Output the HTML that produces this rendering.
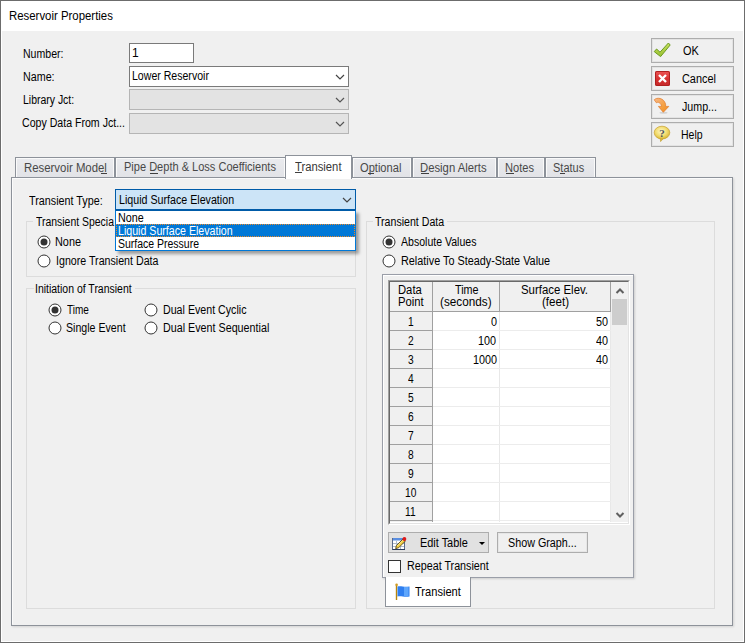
<!DOCTYPE html>
<html><head><meta charset="utf-8"><style>
html,body{margin:0;padding:0;width:745px;height:643px;overflow:hidden;background:#f0f0f0}
body>div,body>svg{position:absolute}
div{position:absolute;white-space:pre;font-family:"Liberation Sans",sans-serif}
</style></head><body>
<div style="left:0px;top:0px;width:745px;height:643px;background:#f0f0f0;border:1px solid #6c6c6c;box-sizing:border-box"></div>
<div style="left:1px;top:1px;width:743px;height:30px;background:#fff"></div>
<div style="left:1px;top:31px;width:1px;height:611px;background:#fff"></div>
<div style="left:743px;top:31px;width:1px;height:611px;background:#fff"></div>
<div style="left:1px;top:641px;width:743px;height:1px;background:#fff"></div>
<div style="left:9.25px;top:10px;font-size:12px;line-height:12px;color:#000;transform:scaleX(0.9500);transform-origin:0 0;">Reservoir Properties</div>
<div style="left:22.72px;top:48px;font-size:12px;line-height:12px;color:#000;transform:scaleX(0.8795);transform-origin:0 0;">Number:</div>
<div style="left:22.71px;top:71px;font-size:12px;line-height:12px;color:#000;transform:scaleX(0.8939);transform-origin:0 0;">Name:</div>
<div style="left:22.73px;top:94px;font-size:12px;line-height:12px;color:#000;transform:scaleX(0.8719);transform-origin:0 0;">Library Jct:</div>
<div style="left:21.92px;top:117px;font-size:12px;line-height:12px;color:#000;transform:scaleX(0.8826);transform-origin:0 0;">Copy Data From Jct...</div>
<div style="left:129px;top:43px;width:65px;height:20px;background:#fff;border:1px solid #7a7a7a;box-sizing:border-box"></div>
<div style="left:132.00px;top:47px;font-size:12px;line-height:12px;color:#000;">1</div>
<div style="left:129px;top:66px;width:220px;height:21px;background:#fff;border:1px solid #7a7a7a;box-sizing:border-box"></div>
<svg width="10" height="6" viewBox="0 0 10 6" style="position:absolute;left:335px;top:74px"><path d="M1 1 L5 5 L9 1" fill="none" stroke="#444" stroke-width="1.2"/></svg>
<div style="left:131.52px;top:70px;font-size:12px;line-height:12px;color:#000;transform:scaleX(0.8802);transform-origin:0 0;">Lower Reservoir</div>
<div style="left:129px;top:89px;width:220px;height:21px;background:#e3e3e3;border:1px solid #b5b5b5;box-sizing:border-box"></div>
<svg width="10" height="6" viewBox="0 0 10 6" style="position:absolute;left:335px;top:97px"><path d="M1 1 L5 5 L9 1" fill="none" stroke="#555" stroke-width="1.2"/></svg>
<div style="left:129px;top:113px;width:220px;height:21px;background:#e3e3e3;border:1px solid #b5b5b5;box-sizing:border-box"></div>
<svg width="10" height="6" viewBox="0 0 10 6" style="position:absolute;left:335px;top:121px"><path d="M1 1 L5 5 L9 1" fill="none" stroke="#555" stroke-width="1.2"/></svg>
<div style="left:651px;top:38px;width:83px;height:25px;background:#f0f0f0;border:1px solid #adadad;box-sizing:border-box"></div>
<div style="left:652px;top:39px;width:81px;height:23px;border:1px solid #e3e3e3;box-sizing:border-box"></div>
<div style="left:683.40px;top:45px;font-size:12px;line-height:12px;color:#000;transform:scaleX(0.9118);transform-origin:0 0;">OK</div>
<div style="left:651px;top:66px;width:83px;height:25px;background:#f0f0f0;border:1px solid #adadad;box-sizing:border-box"></div>
<div style="left:652px;top:67px;width:81px;height:23px;border:1px solid #e3e3e3;box-sizing:border-box"></div>
<div style="left:681.59px;top:73px;font-size:12px;line-height:12px;color:#000;transform:scaleX(0.9083);transform-origin:0 0;">Cancel</div>
<div style="left:651px;top:94px;width:83px;height:25px;background:#f0f0f0;border:1px solid #adadad;box-sizing:border-box"></div>
<div style="left:652px;top:95px;width:81px;height:23px;border:1px solid #e3e3e3;box-sizing:border-box"></div>
<div style="left:681.70px;top:101px;font-size:12px;line-height:12px;color:#000;transform:scaleX(0.8895);transform-origin:0 0;">Jump...</div>
<div style="left:651px;top:122px;width:83px;height:25px;background:#f0f0f0;border:1px solid #adadad;box-sizing:border-box"></div>
<div style="left:652px;top:123px;width:81px;height:23px;border:1px solid #e3e3e3;box-sizing:border-box"></div>
<div style="left:680.83px;top:129px;font-size:12px;line-height:12px;color:#000;transform:scaleX(0.8739);transform-origin:0 0;">Help</div>
<svg width="20" height="20" viewBox="0 0 20 20" style="position:absolute;left:652px;top:40px"><defs><linearGradient id="gck" x1="0" y1="0" x2="0" y2="1"><stop offset="0" stop-color="#c8e060"/><stop offset="1" stop-color="#98c030"/></linearGradient></defs><path d="M2.2 11.6 L4.6 9 L8 12.2 L16.4 3 L18.2 5 L8.6 16.6 Z" fill="url(#gck)" stroke="#6a9a20" stroke-width="1" stroke-linejoin="round"/></svg>
<div style="left:655px;top:71px;width:15px;height:15px;background:linear-gradient(#ee5555,#d63030 55%,#c42a2a);border-radius:2px;box-shadow:inset 0 0 0 1px #b02020"></div>
<svg width="15" height="15" viewBox="0 0 15 15" style="position:absolute;left:655px;top:71px"><path d="M4 4 L11 11 M11 4 L4 11" stroke="#fff" stroke-width="2.4"/></svg>
<svg width="18" height="18" viewBox="0 0 18 18" style="position:absolute;left:653px;top:97px"><defs><linearGradient id="gjp" x1="0" y1="0" x2="1" y2="1"><stop offset="0" stop-color="#f8b888"/><stop offset="0.6" stop-color="#f5a040"/><stop offset="1" stop-color="#f08a20"/></linearGradient></defs><ellipse cx="10.5" cy="15.8" rx="4" ry="1" fill="rgba(0,0,0,0.12)"/><path d="M1.2 2.8 C3.5 0.2 10.8 0.4 12.6 7.2 L12.6 9.4 L15.8 9.4 L10.3 15.3 L5.4 9.4 L8.6 9.4 C8 5.8 4.8 4.4 3.4 5.8 Z" fill="url(#gjp)" stroke="#e07828" stroke-width="0.7" stroke-linejoin="round"/></svg>
<svg width="18" height="18" viewBox="0 0 18 18" style="position:absolute;left:653px;top:125px"><defs><radialGradient id="ghp" cx="0.45" cy="0.4" r="0.6"><stop offset="0" stop-color="#fdf8c8"/><stop offset="0.6" stop-color="#f2dc70"/><stop offset="1" stop-color="#d8b838"/></radialGradient></defs><path d="M7.2 12.8 L7.6 16.6 L11 12.8 Z" fill="#e0c040" stroke="#c09a28" stroke-width="0.6"/><ellipse cx="9" cy="7.6" rx="7.8" ry="6.4" fill="url(#ghp)" stroke="#c8a030" stroke-width="0.7"/><text x="9" y="11.8" font-family="Liberation Serif" font-weight="bold" font-size="11" text-anchor="middle" fill="#4a5060">?</text></svg>
<div style="left:11px;top:177px;width:722px;height:449px;background:#f0f0f0;border:1px solid #8d929a;box-sizing:border-box;box-shadow:1px 1px 2px rgba(0,0,0,0.12)"></div>
<div style="left:12px;top:178px;width:720px;height:1px;background:#fbfbfb"></div>
<div style="left:12px;top:178px;width:1px;height:446px;background:#fbfbfb"></div>
<div style="left:15px;top:157px;width:100px;height:21px;background:linear-gradient(#eaebee,#e2e3e7);border:1px solid #8d929a;box-sizing:border-box;box-shadow:inset 1px 1px 0 #fafafa, inset -1px 0 0 #fafafa"></div>
<div style="left:23.65px;top:162px;font-size:12px;line-height:12px;color:#484848;transform:scaleX(0.9488);transform-origin:0 0;">Reservoir Model</div>
<div style="left:115px;top:157px;width:171px;height:21px;background:linear-gradient(#eaebee,#e2e3e7);border:1px solid #8d929a;box-sizing:border-box;box-shadow:inset 1px 1px 0 #fafafa, inset -1px 0 0 #fafafa"></div>
<div style="left:123.58px;top:161px;font-size:12px;line-height:12px;color:#484848;transform:scaleX(0.9195);transform-origin:0 0;">Pipe Depth &amp; Loss Coefficients</div>
<div style="left:352px;top:157px;width:60px;height:21px;background:linear-gradient(#eaebee,#e2e3e7);border:1px solid #8d929a;box-sizing:border-box;box-shadow:inset 1px 1px 0 #fafafa, inset -1px 0 0 #fafafa"></div>
<div style="left:360.30px;top:162px;font-size:12px;line-height:12px;color:#484848;transform:scaleX(0.9250);transform-origin:0 0;">Optional</div>
<div style="left:412px;top:157px;width:85px;height:21px;background:linear-gradient(#eaebee,#e2e3e7);border:1px solid #8d929a;box-sizing:border-box;box-shadow:inset 1px 1px 0 #fafafa, inset -1px 0 0 #fafafa"></div>
<div style="left:420.26px;top:162px;font-size:12px;line-height:12px;color:#484848;transform:scaleX(0.9420);transform-origin:0 0;">Design Alerts</div>
<div style="left:497px;top:157px;width:48px;height:21px;background:linear-gradient(#eaebee,#e2e3e7);border:1px solid #8d929a;box-sizing:border-box;box-shadow:inset 1px 1px 0 #fafafa, inset -1px 0 0 #fafafa"></div>
<div style="left:505.27px;top:162px;font-size:12px;line-height:12px;color:#484848;transform:scaleX(0.9267);transform-origin:0 0;">Notes</div>
<div style="left:545px;top:157px;width:51px;height:21px;background:linear-gradient(#eaebee,#e2e3e7);border:1px solid #8d929a;box-sizing:border-box;box-shadow:inset 1px 1px 0 #fafafa, inset -1px 0 0 #fafafa"></div>
<div style="left:553.28px;top:162px;font-size:12px;line-height:12px;color:#484848;transform:scaleX(0.9152);transform-origin:0 0;">Status</div>
<div style="left:285px;top:155px;width:67px;height:24px;background:#fff;border:1px solid #8d929a;border-bottom:none;box-sizing:border-box"></div>
<div style="left:295.00px;top:161px;font-size:12px;line-height:12px;color:#383838;transform:scaleX(0.9380);transform-origin:0 0;">Transient</div>
<div style="left:101px;top:173px;width:6px;height:1px;background:#404040"></div>
<div style="left:150px;top:173px;width:8px;height:1px;background:#404040"></div>
<div style="left:295px;top:172px;width:7px;height:1px;background:#404040"></div>
<div style="left:368px;top:173px;width:6px;height:1px;background:#404040"></div>
<div style="left:421px;top:173px;width:8px;height:1px;background:#404040"></div>
<div style="left:506px;top:173px;width:8px;height:1px;background:#404040"></div>
<div style="left:560px;top:173px;width:5px;height:1px;background:#404040"></div>
<div style="left:29.40px;top:195px;font-size:12px;line-height:12px;color:#000;transform:scaleX(0.8975);transform-origin:0 0;">Transient Type:</div>
<div style="left:26px;top:221px;width:330px;height:56px;border:1px solid #dcdcdc;box-sizing:border-box"></div>
<div style="left:33px;top:220px;width:95px;height:3px;background:#f0f0f0"></div>
<div style="left:35.60px;top:216px;font-size:12px;line-height:12px;color:#000;transform:scaleX(0.8700);transform-origin:0 0;">Transient Specia</div>
<div style="left:26px;top:288px;width:330px;height:321px;border:1px solid #dcdcdc;box-sizing:border-box"></div>
<div style="left:33.5px;top:287px;width:101px;height:3px;background:#f0f0f0"></div>
<div style="left:34.73px;top:283px;font-size:12px;line-height:12px;color:#000;transform:scaleX(0.8727);transform-origin:0 0;">Initiation of Transient</div>
<div style="left:366px;top:221px;width:349px;height:388px;border:1px solid #dcdcdc;box-sizing:border-box"></div>
<div style="left:373.2px;top:220px;width:74px;height:3px;background:#f0f0f0"></div>
<div style="left:375.20px;top:216px;font-size:12px;line-height:12px;color:#000;transform:scaleX(0.8833);transform-origin:0 0;">Transient Data</div>
<svg width="14" height="14" viewBox="0 0 14 14" style="position:absolute;left:36.5px;top:234.5px"><circle cx="7" cy="7" r="6" fill="#fff" stroke="#333" stroke-width="1"/><circle cx="7" cy="7" r="3.5" fill="#333"/></svg>
<div style="left:55.49px;top:236px;font-size:12px;line-height:12px;color:#000;transform:scaleX(0.9074);transform-origin:0 0;">None</div>
<svg width="14" height="14" viewBox="0 0 14 14" style="position:absolute;left:36.5px;top:253.5px"><circle cx="7" cy="7" r="6" fill="#fff" stroke="#333" stroke-width="1"/></svg>
<div style="left:55.51px;top:255px;font-size:12px;line-height:12px;color:#000;transform:scaleX(0.8877);transform-origin:0 0;">Ignore Transient Data</div>
<svg width="14" height="14" viewBox="0 0 14 14" style="position:absolute;left:47.5px;top:302.5px"><circle cx="7" cy="7" r="6" fill="#fff" stroke="#333" stroke-width="1"/><circle cx="7" cy="7" r="3.5" fill="#333"/></svg>
<div style="left:67.30px;top:304px;font-size:12px;line-height:12px;color:#000;transform:scaleX(0.8346);transform-origin:0 0;">Time</div>
<svg width="14" height="14" viewBox="0 0 14 14" style="position:absolute;left:47.5px;top:320.5px"><circle cx="7" cy="7" r="6" fill="#fff" stroke="#333" stroke-width="1"/></svg>
<div style="left:66.42px;top:322px;font-size:12px;line-height:12px;color:#000;transform:scaleX(0.8848);transform-origin:0 0;">Single Event</div>
<svg width="14" height="14" viewBox="0 0 14 14" style="position:absolute;left:143.5px;top:302.5px"><circle cx="7" cy="7" r="6" fill="#fff" stroke="#333" stroke-width="1"/></svg>
<div style="left:162.91px;top:304px;font-size:12px;line-height:12px;color:#000;transform:scaleX(0.8882);transform-origin:0 0;">Dual Event Cyclic</div>
<svg width="14" height="14" viewBox="0 0 14 14" style="position:absolute;left:143.5px;top:320.5px"><circle cx="7" cy="7" r="6" fill="#fff" stroke="#333" stroke-width="1"/></svg>
<div style="left:162.91px;top:322px;font-size:12px;line-height:12px;color:#000;transform:scaleX(0.8949);transform-origin:0 0;">Dual Event Sequential</div>
<svg width="14" height="14" viewBox="0 0 14 14" style="position:absolute;left:381.5px;top:234.5px"><circle cx="7" cy="7" r="6" fill="#fff" stroke="#333" stroke-width="1"/><circle cx="7" cy="7" r="3.5" fill="#333"/></svg>
<div style="left:401.40px;top:236px;font-size:12px;line-height:12px;color:#000;transform:scaleX(0.8788);transform-origin:0 0;">Absolute Values</div>
<svg width="14" height="14" viewBox="0 0 14 14" style="position:absolute;left:381.5px;top:253.5px"><circle cx="7" cy="7" r="6" fill="#fff" stroke="#333" stroke-width="1"/></svg>
<div style="left:400.50px;top:255px;font-size:12px;line-height:12px;color:#000;transform:scaleX(0.9037);transform-origin:0 0;">Relative To Steady-State Value</div>
<div style="left:382px;top:274px;width:252px;height:304px;background:#f0f0f0;border:1px solid #9a9ea8;box-sizing:border-box;box-shadow:1px 1px 2px rgba(0,0,0,0.15), inset 1px 1px 0 #fff"></div>
<div style="left:388px;top:280px;width:242px;height:245px;border-top:1px solid #a0a0a0;border-left:1px solid #a0a0a0;border-right:1px solid #fff;border-bottom:1px solid #fff;box-sizing:border-box"></div>
<div style="left:389px;top:281px;width:240px;height:243px;background:#fff;border-top:1px solid #696969;border-left:1px solid #696969;border-right:1px solid #e3e3e3;border-bottom:1px solid #e3e3e3;box-sizing:border-box"></div>
<div style="left:390px;top:282px;width:221px;height:30px;background:#f0f0f0"></div>
<div style="left:390px;top:312px;width:43px;height:210px;background:#f0f0f0"></div>
<div style="left:390px;top:311px;width:221px;height:1px;background:#a0a0a0"></div>
<div style="left:432px;top:282px;width:1px;height:240px;background:#a0a0a0"></div>
<div style="left:499px;top:282px;width:1px;height:30px;background:#a0a0a0"></div>
<div style="left:610px;top:282px;width:1px;height:30px;background:#a0a0a0"></div>
<div style="left:499px;top:312px;width:1px;height:210px;background:#e8e8e8"></div>
<div style="left:610px;top:312px;width:1px;height:210px;background:#e8e8e8"></div>
<div style="left:390px;top:330px;width:43px;height:1px;background:#a0a0a0"></div>
<div style="left:433px;top:330px;width:178px;height:1px;background:#ececec"></div>
<div style="left:390px;top:349px;width:43px;height:1px;background:#a0a0a0"></div>
<div style="left:433px;top:349px;width:178px;height:1px;background:#ececec"></div>
<div style="left:390px;top:368px;width:43px;height:1px;background:#a0a0a0"></div>
<div style="left:433px;top:368px;width:178px;height:1px;background:#ececec"></div>
<div style="left:390px;top:387px;width:43px;height:1px;background:#a0a0a0"></div>
<div style="left:433px;top:387px;width:178px;height:1px;background:#ececec"></div>
<div style="left:390px;top:406px;width:43px;height:1px;background:#a0a0a0"></div>
<div style="left:433px;top:406px;width:178px;height:1px;background:#ececec"></div>
<div style="left:390px;top:425px;width:43px;height:1px;background:#a0a0a0"></div>
<div style="left:433px;top:425px;width:178px;height:1px;background:#ececec"></div>
<div style="left:390px;top:444px;width:43px;height:1px;background:#a0a0a0"></div>
<div style="left:433px;top:444px;width:178px;height:1px;background:#ececec"></div>
<div style="left:390px;top:463px;width:43px;height:1px;background:#a0a0a0"></div>
<div style="left:433px;top:463px;width:178px;height:1px;background:#ececec"></div>
<div style="left:390px;top:482px;width:43px;height:1px;background:#a0a0a0"></div>
<div style="left:433px;top:482px;width:178px;height:1px;background:#ececec"></div>
<div style="left:390px;top:501px;width:43px;height:1px;background:#a0a0a0"></div>
<div style="left:433px;top:501px;width:178px;height:1px;background:#ececec"></div>
<div style="left:390px;top:520px;width:43px;height:1px;background:#a0a0a0"></div>
<div style="left:433px;top:520px;width:178px;height:1px;background:#ececec"></div>
<div style="left:611px;top:282px;width:17px;height:240px;background:#f0f0f0"></div>
<div style="left:612px;top:299px;width:15px;height:26px;background:#cdcdcd"></div>
<svg width="10" height="8" viewBox="0 0 10 8" style="position:absolute;left:614.5px;top:287px"><path d="M1.5 6 L5 2.5 L8.5 6" fill="none" stroke="#606060" stroke-width="2"/></svg>
<svg width="10" height="8" viewBox="0 0 10 8" style="position:absolute;left:614.5px;top:511px"><path d="M1.5 2 L5 5.5 L8.5 2" fill="none" stroke="#606060" stroke-width="2"/></svg>
<div style="left:397.96px;top:284px;font-size:12px;line-height:12px;color:#000;transform:scaleX(0.9375);transform-origin:0 0;">Data</div>
<div style="left:397.66px;top:296px;font-size:12px;line-height:12px;color:#000;transform:scaleX(0.9385);transform-origin:0 0;">Point</div>
<div style="left:454.50px;top:284px;font-size:12px;line-height:12px;color:#000;transform:scaleX(0.8962);transform-origin:0 0;">Time</div>
<div style="left:439.82px;top:296px;font-size:12px;line-height:12px;color:#000;transform:scaleX(0.9784);transform-origin:0 0;">(seconds)</div>
<div style="left:521.05px;top:284px;font-size:12px;line-height:12px;color:#000;transform:scaleX(0.9507);transform-origin:0 0;">Surface Elev.</div>
<div style="left:541.63px;top:296px;font-size:12px;line-height:12px;color:#000;transform:scaleX(0.9654);transform-origin:0 0;">(feet)</div>
<div style="left:408.02px;top:316px;font-size:12px;line-height:12px;color:#000;transform:scaleX(0.8500);transform-origin:0 0;">1</div>
<div style="left:408.02px;top:335px;font-size:12px;line-height:12px;color:#000;transform:scaleX(0.8500);transform-origin:0 0;">2</div>
<div style="left:408.02px;top:354px;font-size:12px;line-height:12px;color:#000;transform:scaleX(0.8500);transform-origin:0 0;">3</div>
<div style="left:408.02px;top:373px;font-size:12px;line-height:12px;color:#000;transform:scaleX(0.8500);transform-origin:0 0;">4</div>
<div style="left:408.02px;top:392px;font-size:12px;line-height:12px;color:#000;transform:scaleX(0.8500);transform-origin:0 0;">5</div>
<div style="left:408.02px;top:411px;font-size:12px;line-height:12px;color:#000;transform:scaleX(0.8500);transform-origin:0 0;">6</div>
<div style="left:408.02px;top:430px;font-size:12px;line-height:12px;color:#000;transform:scaleX(0.8500);transform-origin:0 0;">7</div>
<div style="left:408.45px;top:449px;font-size:12px;line-height:12px;color:#000;transform:scaleX(0.8500);transform-origin:0 0;">8</div>
<div style="left:408.02px;top:468px;font-size:12px;line-height:12px;color:#000;transform:scaleX(0.8500);transform-origin:0 0;">9</div>
<div style="left:405.05px;top:487px;font-size:12px;line-height:12px;color:#000;transform:scaleX(0.8500);transform-origin:0 0;">10</div>
<div style="left:405.48px;top:506px;font-size:12px;line-height:12px;color:#000;transform:scaleX(0.8500);transform-origin:0 0;">11</div>
<div style="left:490.60px;top:316px;font-size:12px;line-height:12px;color:#000;transform:scaleX(0.9000);transform-origin:0 0;">0</div>
<div style="left:596.30px;top:316px;font-size:12px;line-height:12px;color:#000;transform:scaleX(0.9000);transform-origin:0 0;">50</div>
<div style="left:478.00px;top:335px;font-size:12px;line-height:12px;color:#000;transform:scaleX(0.9000);transform-origin:0 0;">100</div>
<div style="left:596.30px;top:335px;font-size:12px;line-height:12px;color:#000;transform:scaleX(0.9000);transform-origin:0 0;">40</div>
<div style="left:472.60px;top:354px;font-size:12px;line-height:12px;color:#000;transform:scaleX(0.9000);transform-origin:0 0;">1000</div>
<div style="left:596.30px;top:354px;font-size:12px;line-height:12px;color:#000;transform:scaleX(0.9000);transform-origin:0 0;">40</div>
<div style="left:388px;top:532px;width:101px;height:21px;background:#e1e1e1;border:1px solid #adadad;box-sizing:border-box"></div>
<div style="left:419.59px;top:537px;font-size:12px;line-height:12px;color:#000;transform:scaleX(0.9098);transform-origin:0 0;">Edit Table</div>
<svg width="8" height="5" viewBox="0 0 8 5" style="position:absolute;left:478px;top:541px"><path d="M1 1 L7 1 L4 4 Z" fill="#000"/></svg>
<svg width="16" height="16" viewBox="0 0 16 16" style="position:absolute;left:391px;top:536px"><rect x="1.5" y="2.5" width="12" height="11" fill="#fff" stroke="#5a6a8a" stroke-width="1"/><rect x="1.5" y="13" width="12.5" height="1" fill="#2a3a5a"/><rect x="2" y="2" width="11.5" height="2.5" fill="#5a8ee0"/><path d="M2 7.5 H13 M2 10.5 H13 M5.5 5 V13 M9.5 5 V13" stroke="#b0bccc" stroke-width="1"/><path d="M4.6 12.6 L5.4 9.6 L12.2 2.8 L14.4 5 L7.6 11.8 Z" fill="#f0cc40" stroke="#4a3a10" stroke-width="0.8" stroke-linejoin="round"/><path d="M6.2 10 L12.4 3.8" stroke="#fff0a0" stroke-width="0.8"/><circle cx="13.4" cy="3" r="1.9" fill="#e01818"/></svg>
<div style="left:497px;top:532px;width:91px;height:21px;background:#f0f0f0;border:1px solid #adadad;box-sizing:border-box;box-shadow:inset 0 0 0 1px #e6e6e6"></div>
<div style="left:507.50px;top:537px;font-size:12px;line-height:12px;color:#000;transform:scaleX(0.8960);transform-origin:0 0;">Show Graph...</div>
<div style="left:388px;top:560px;width:13px;height:13px;background:#fff;border:1px solid #333;box-sizing:border-box"></div>
<div style="left:406.61px;top:560px;font-size:12px;line-height:12px;color:#000;transform:scaleX(0.8944);transform-origin:0 0;">Repeat Transient</div>
<div style="left:385px;top:577px;width:86px;height:30px;background:#fff;border:1px solid #8d929a;border-top:none;box-sizing:border-box"></div>
<svg width="16" height="18" viewBox="0 0 16 18" style="position:absolute;left:395px;top:583px"><path d="M1.5 2 V17" stroke="#b8860b" stroke-width="1.4"/><circle cx="1.6" cy="1.8" r="1.3" fill="#d09a20"/><path d="M2.5 3.5 C6 2.5 9 4.5 14.5 3.5 V13.5 C9 14.5 6 12.5 2.5 13.5 Z" fill="#2f7ff0"/><path d="M9 4 C10.5 4.2 12 4 13.5 3.8 V13 C12 13.3 10.5 13.4 9 13.2 Z" fill="#6ab0ff" opacity="0.8"/></svg>
<div style="left:414.70px;top:586px;font-size:12px;line-height:12px;color:#000;transform:scaleX(0.9240);transform-origin:0 0;">Transient</div>
<div style="left:115px;top:189px;width:241px;height:21px;background:#cce4f7;border:1px solid #005ba8;box-sizing:border-box"></div>
<svg width="10" height="6" viewBox="0 0 10 6" style="position:absolute;left:342px;top:196.5px"><path d="M1 1 L5 5 L9 1" fill="none" stroke="#444" stroke-width="1.2"/></svg>
<div style="left:118.61px;top:194px;font-size:12px;line-height:12px;color:#000;transform:scaleX(0.8891);transform-origin:0 0;">Liquid Surface Elevation</div>
<div style="left:115px;top:210px;width:241px;height:41px;background:#fff;border:1px solid #0078d7;border-top:1px solid #005ba8;box-sizing:border-box;box-shadow:3px 3px 3px rgba(0,0,0,0.35)"></div>
<div style="left:118.00px;top:212px;font-size:12px;line-height:12px;color:#000;transform:scaleX(0.8963);transform-origin:0 0;">None</div>
<div style="left:116px;top:224px;width:239px;height:13px;background:#0078d7;outline:1px dotted #e8882a;outline-offset:-1px"></div>
<div style="left:118.01px;top:225px;font-size:12px;line-height:12px;color:#fff;transform:scaleX(0.8859);transform-origin:0 0;">Liquid Surface Elevation</div>
<div style="left:117.53px;top:238px;font-size:12px;line-height:12px;color:#000;transform:scaleX(0.8736);transform-origin:0 0;">Surface Pressure</div>
</body></html>
